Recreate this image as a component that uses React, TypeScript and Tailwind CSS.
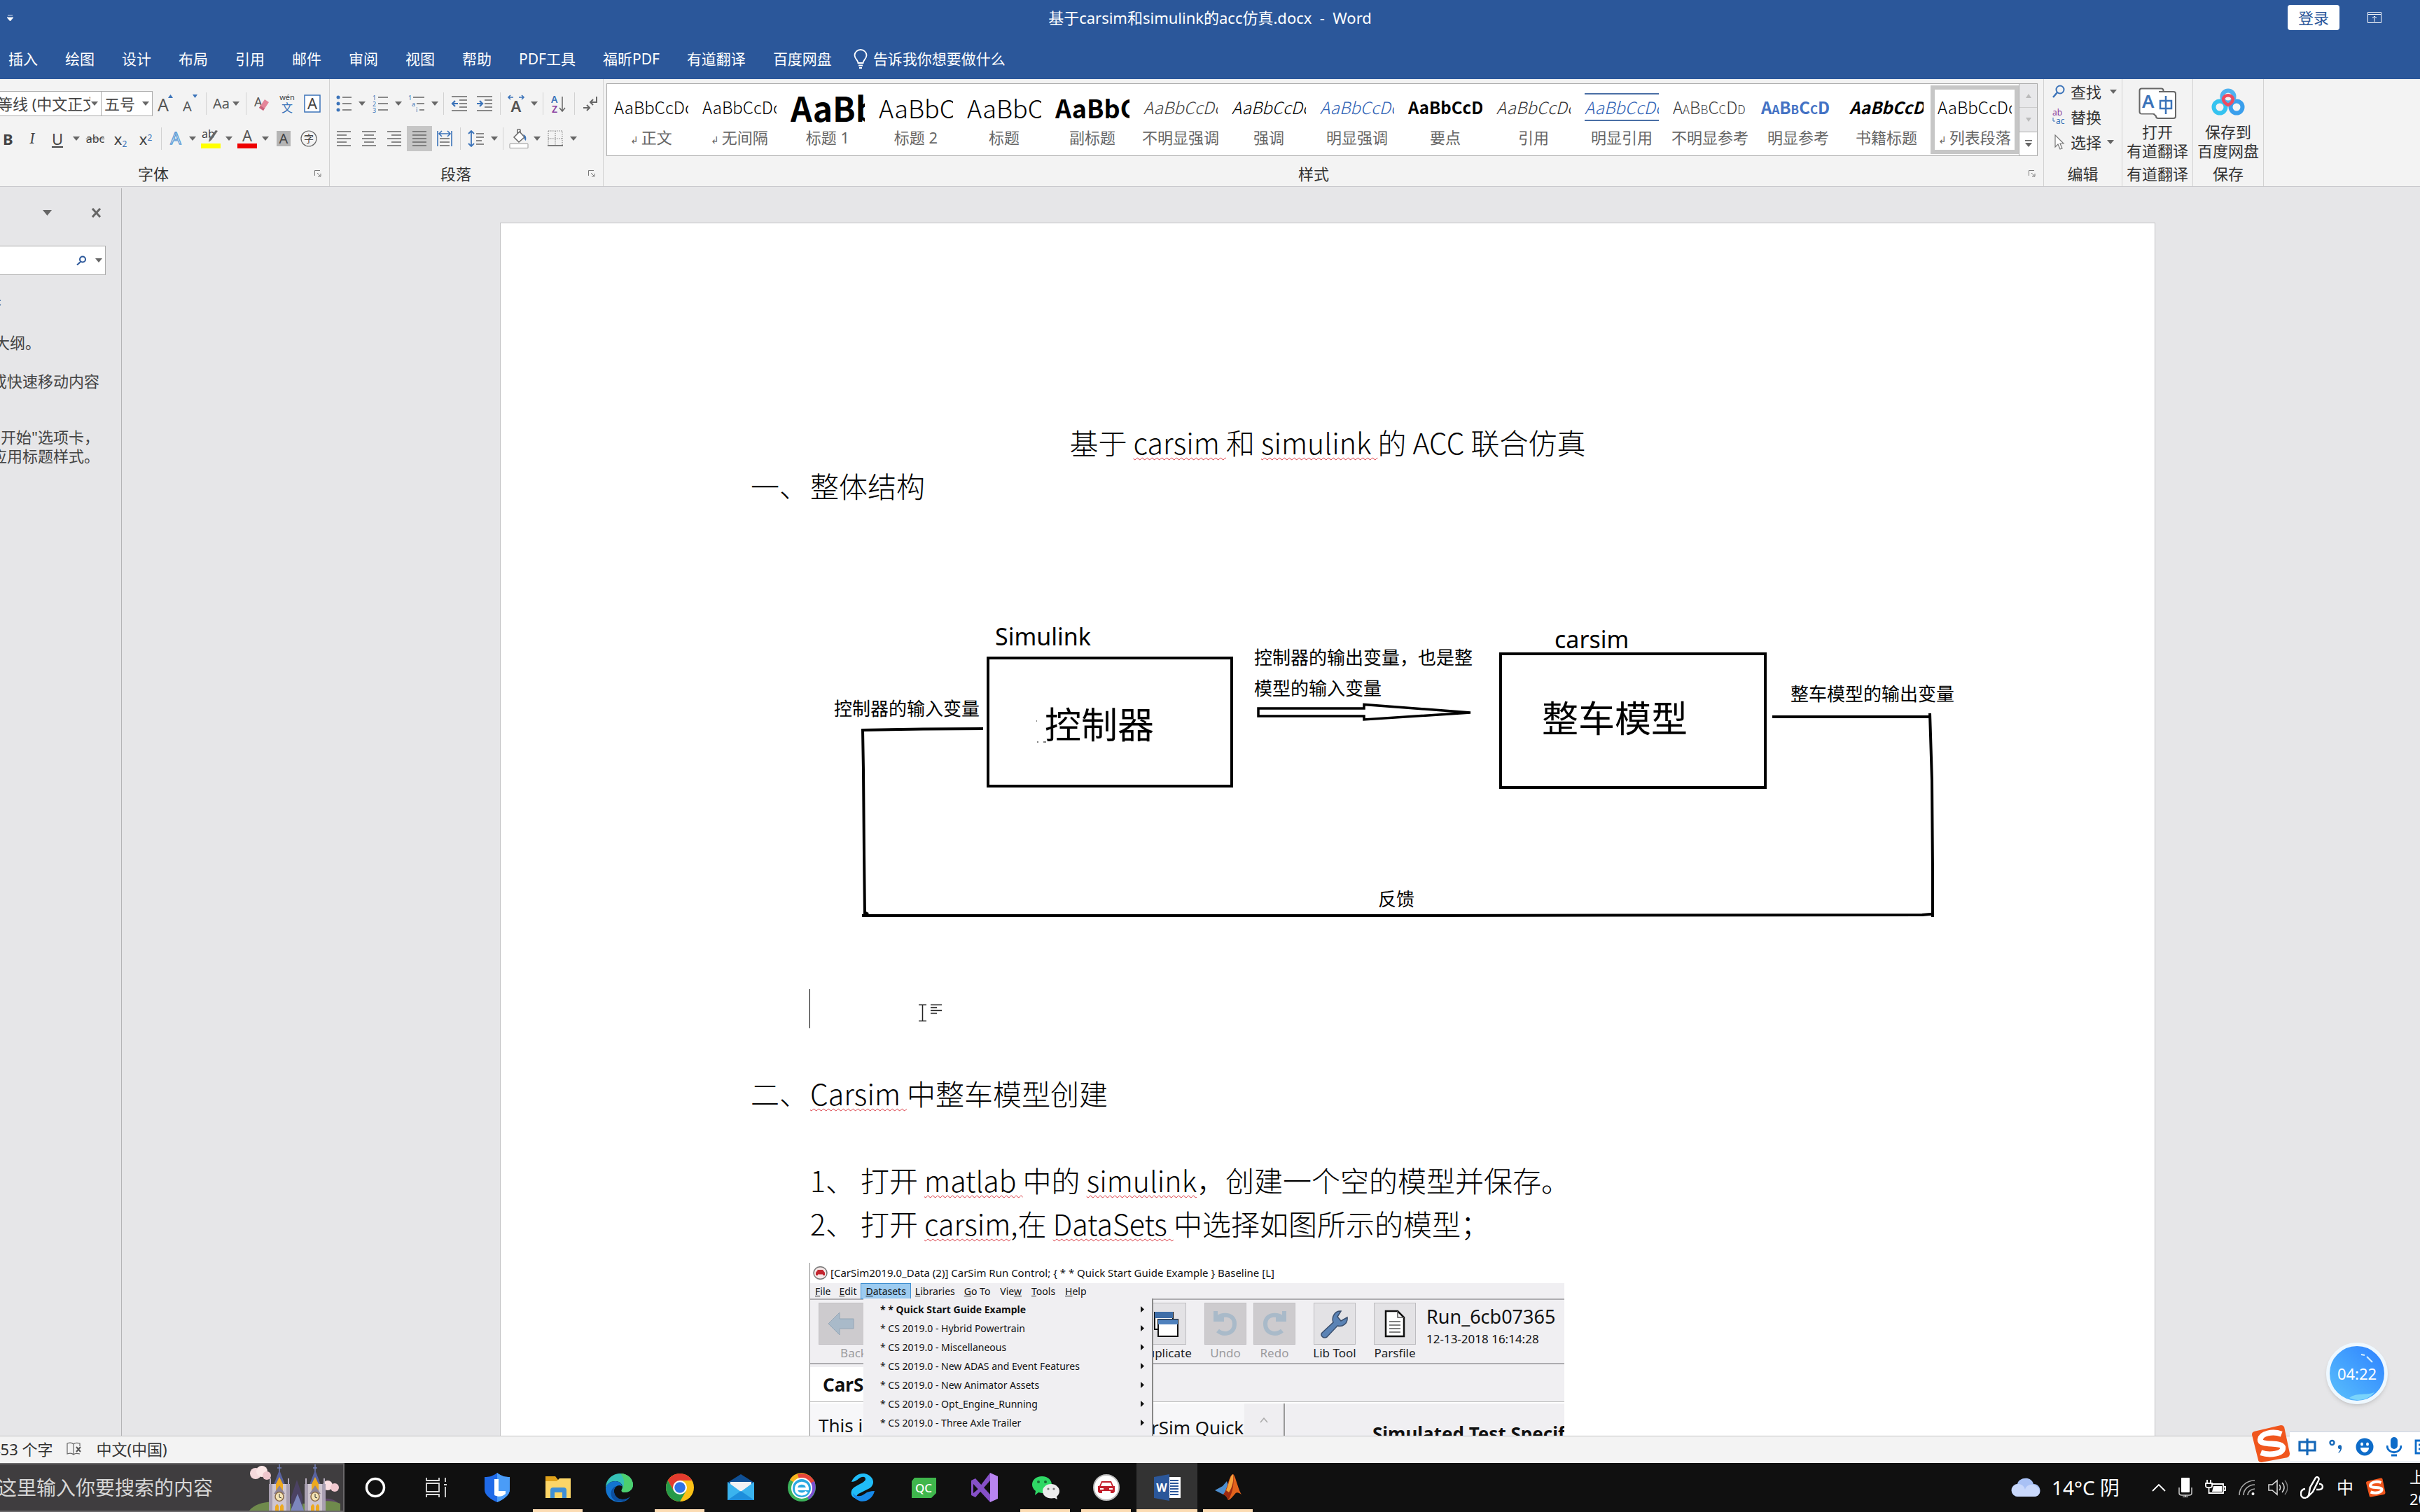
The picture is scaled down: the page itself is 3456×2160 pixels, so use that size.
import type { ReactNode } from 'react'

const tabs = ['插入', '绘图', '设计', '布局', '引用', '邮件', '审阅', '视图', '帮助', 'PDF工具', '福昕PDF', '有道翻译', '百度网盘']

const styles = [
  { name: '正文', para: true, sample: 'AaBbCcDc', cls: 'text-2xl font-light' },
  { name: '无间隔', para: true, sample: 'AaBbCcDc', cls: 'text-2xl font-light' },
  { name: '标题 1', sample: 'AaBb', cls: 'text-5xl font-bold' },
  { name: '标题 2', sample: 'AaBbC', cls: 'text-4xl font-light' },
  { name: '标题', sample: 'AaBbC', cls: 'text-4xl font-light' },
  { name: '副标题', sample: 'AaBbC', cls: 'text-4xl font-bold' },
  { name: '不明显强调', sample: 'AaBbCcDc', cls: 'text-2xl font-light italic text-[#404040]' },
  { name: '强调', sample: 'AaBbCcDc', cls: 'text-2xl font-light italic' },
  { name: '明显强调', sample: 'AaBbCcDc', cls: 'text-2xl font-light italic text-[#2f62b5]' },
  { name: '要点', sample: 'AaBbCcD', cls: 'text-2xl font-bold' },
  { name: '引用', sample: 'AaBbCcDc', cls: 'text-2xl font-light italic text-[#333]' },
  { name: '明显引用', sample: 'AaBbCcDc', cls: 'text-2xl font-light italic text-[#2f62b5] border-y-2 border-[#4a6fa5]' },
  { name: '不明显参考', sample: 'AaBbCcDd', cls: 'text-2xl font-light text-[#404040] [font-variant:small-caps]' },
  { name: '明显参考', sample: 'AaBbCcD', cls: 'text-2xl font-bold text-[#4472c4] [font-variant:small-caps]' },
  { name: '书籍标题', sample: 'AaBbCcD', cls: 'text-2xl font-bold italic' },
  { name: '列表段落', para: true, sample: 'AaBbCcDc', cls: 'text-2xl font-light', selected: true },
]

const datasets = [
  '* * Quick Start Guide Example',
  '* CS 2019.0 - Hybrid Powertrain',
  '* CS 2019.0 - Miscellaneous',
  '* CS 2019.0 - New ADAS and Event Features',
  '* CS 2019.0 - New Animator Assets',
  '* CS 2019.0 - Opt_Engine_Running',
  '* CS 2019.0 - Three Axle Trailer',
]

function Icon({ w, h = w, children }: { w: number; h?: number; children: ReactNode }) {
  return (
    <svg width={w} height={h} viewBox={`0 0 ${w} ${h}`} fill="none" className="shrink-0" aria-hidden="true">
      {children}
    </svg>
  )
}

function Tri({ color = '#666' }: { color?: string }) {
  return (
    <Icon w={10} h={6}>
      <path d="M0 0h10L5 6z" fill={color} />
    </Icon>
  )
}

function Tool({ label, active, children }: { label: string; active?: boolean; children: ReactNode }) {
  return (
    <button aria-label={label} className={`w-9 h-9 shrink-0 flex items-center justify-center ${active ? 'bg-[#c6c6c6]' : ''}`}>
      {children}
    </button>
  )
}

function Drop({ label }: { label: string }) {
  return (
    <button aria-label={label} className="w-4 h-9 shrink-0 flex items-center justify-center">
      <Tri />
    </button>
  )
}

const Sep = () => <span className="w-px h-8 mx-1 shrink-0 bg-[#d2d2d2]" />

function GroupLabel({ text, launcher }: { text: string; launcher?: boolean }) {
  return (
    <div className="mt-auto flex items-center leading-7 pb-1 text-[#333]">
      <span className="flex-1 text-center whitespace-nowrap">{text}</span>
      {launcher && (
        <button aria-label={`${text}设置`} className="w-8 flex justify-center">
          <Icon w={10} h={10}>
            <path d="M.5 8V.5H8M4 4l5 5M9 5v4H5" stroke="#777" />
          </Icon>
        </button>
      )}
    </div>
  )
}

/* Horizontal text lines, each given as [x1, x2] */
function Lines({ rows }: { rows: number[][] }) {
  return (
    <Icon w={22} h={24}>
      {rows.map(([a, b], i) => (
        <path key={i} d={`M${a} ${2 + i * 5}H${b}`} stroke="#666" strokeWidth={1.5} />
      ))}
    </Icon>
  )
}

function TitleBar() {
  return (
    <header className="bg-[#2b579a] text-white">
      <div className="h-[54px] pb-1 flex items-center">
        <div className="flex-1">
          <button aria-label="自定义快速访问工具栏" className="block ml-[10px]">
            <Icon w={9} h={9}>
              <path d="M1 1h7M0 4h9L4.500 9z" stroke="#fff" fill="#fff" strokeWidth={.8} />
            </Icon>
          </button>
        </div>
        <h1 className="whitespace-pre">基于carsim和simulink的acc仿真.docx  -  Word</h1>
        <div className="flex-1">
          <div className="flex items-center justify-end gap-10 mr-[55px]">
            <button className="bg-white text-[#2b579a] rounded-sm w-[74px] h-9">登录</button>
            <button aria-label="功能区显示选项">
              <Icon w={20} h={16}>
                <path d="M.5 .5h19v15H.5zM.5 3.500h19M10 14V6M7 9l3-3 3 3" stroke="#fff" />
              </Icon>
            </button>
          </div>
        </div>
      </div>
      <nav className="h-[59px] flex items-center gap-[39px] pl-3 text-[21px]">
        {tabs.map((t) => (
          <button key={t} className="whitespace-nowrap">{t}</button>
        ))}
        <button className="flex items-center gap-2 whitespace-nowrap -ml-2">
          <Icon w={20} h={28}>
            <path d="M6.500 20c0-4-5-6-5-11a8.500 8 0 0 1 17 0c0 5-5 7-5 11zM7 23.500h6M8 27h4" stroke="#fff" strokeWidth={1.8} />
          </Icon>
          告诉我你想要做什么
        </button>
      </nav>
    </header>
  )
}

function FontGroup() {
  return (
    <section className="w-[471px] shrink-0 pt-2.5 flex flex-col border-r border-[#d2d2d2]">
      <div className="h-[50px] flex items-center">
        <div className="w-[218px] h-9 shrink-0 flex bg-white border border-l-0 border-[#ababab] text-[#444]">
          <button className="w-[145px] flex items-center justify-between pr-1 border-r border-[#ababab] whitespace-nowrap">
            <span className="w-[129px] overflow-hidden text-left"><span className="-ml-1">等线 (中文正文)</span></span>
            <Tri />
          </button>
          <button className="flex-1 flex items-center justify-between px-1">
            五号
            <Tri />
          </button>
        </div>
        <Tool label="增大字号">
          <Icon w={22} h={26}>
            <text x="0" y="24" fontSize="25" fill="#555">A</text>
            <path d="M15 5h7l-3.500-5z" fill="#3b73b9" />
          </Icon>
        </Tool>
        <Tool label="减小字号">
          <Icon w={22} h={26}>
            <text x="0" y="24" fontSize="20" fill="#555">A</text>
            <path d="M14 0h7l-3.500 5z" fill="#3b73b9" />
          </Icon>
        </Tool>
        <Sep />
        <button className="w-12 shrink-0 flex items-center justify-center gap-1 text-xl text-[#555]">Aa<Tri /></button>
        <Sep />
        <Tool label="清除所有格式">
          <Icon w={22} h={26}>
            <text x="0" y="17" fontSize="18" fill="#555">A</text>
            <path d="M7 19l8-12 6 4-8 12z" fill="#e4869a" />
            <path d="M7 19l2-3 6 4-2 3z" fill="#c9647d" />
          </Icon>
        </Tool>
        <Tool label="拼音指南">
          <Icon w={24} h={28}>
            <text x="12" y="9" fontSize="11" textAnchor="middle" fill="#444">wén</text>
            <text x="12" y="26" fontSize="16" textAnchor="middle" fill="#3b73b9">文</text>
          </Icon>
        </Tool>
        <Tool label="字符边框">
          <Icon w={24} h={26}>
            <rect x="1" y="1" width="22" height="24" fill="#fff" stroke="#3b73b9" strokeWidth={1.500} />
            <text x="12" y="21" fontSize="22" textAnchor="middle" fill="#444">A</text>
          </Icon>
        </Tool>
      </div>
      <div className="h-[50px] flex items-center text-[#444]">
        <button className="w-7 pl-1 text-left font-bold">B</button>
        <button className="w-9 italic font-serif">I</button>
        <button className="w-9 underline">U</button>
        <button aria-label="下划线选项" className="w-[18px] flex justify-center"><Tri /></button>
        <button className="w-9 line-through text-base">abc</button>
        <button className="w-9">x<sub className="text-xs text-[#3b73b9]">2</sub></button>
        <button className="w-9">x<sup className="text-xs text-[#3b73b9]">2</sup></button>
        <Sep />
        <button aria-label="文本效果" className="w-8 flex justify-center">
          <Icon w={24} h={28}>
            <text x="12" y="22" fontSize="24" textAnchor="middle" fill="#fff" stroke="#5b9bd5" strokeWidth={1.300}>A</text>
          </Icon>
        </button>
        <Drop label="文本效果选项" />
        <Tool label="突出显示">
          <Icon w={30} h={28}>
            <text x="2" y="13" fontSize="16" fill="#444">ab</text>
            <path d="M25 3l-9 13-4 3 1-5L22 2z" fill="#666" />
            <path d="M1 21h28v7H1z" fill="#ff0" />
          </Icon>
        </Tool>
        <Drop label="突出显示选项" />
        <Tool label="字体颜色">
          <Icon w={30} h={28}>
            <text x="15" y="18" fontSize="22" textAnchor="middle" fill="#555">A</text>
            <path d="M1 21h28v7H1z" fill="#e00" />
          </Icon>
        </Tool>
        <Drop label="字体颜色选项" />
        <Tool label="字符底纹">
          <span className="bg-[#b5b5b5] px-1 leading-[22px] text-xl">A</span>
        </Tool>
        <Tool label="带圈字符">
          <Icon w={24}>
            <circle cx="12" cy="12" r="11" stroke="#666" strokeWidth={1.200} />
            <text x="12" y="17" fontSize="14" textAnchor="middle" fill="#444">字</text>
          </Icon>
        </Tool>
      </div>
      <GroupLabel text="字体" launcher />
    </section>
  )
}

function ParagraphGroup() {
  return (
    <section className="w-[391px] shrink-0 pt-2.5 pl-0.5 flex flex-col border-r border-[#d2d2d2]">
      <div className="h-[50px] flex items-center">
        <Tool label="项目符号">
          <Icon w={24} h={26}>
            {[4, 13, 22].map((y) => (
              <g key={y}>
                <circle cx="4" cy={y} r="2.500" fill="#3b73b9" />
                <path d={`M10 ${y}h13`} stroke="#666" strokeWidth={1.500} />
              </g>
            ))}
          </Icon>
        </Tool>
        <Drop label="项目符号选项" />
        <Tool label="编号">
          <Icon w={24} h={26}>
            {[4, 13, 22].map((y, i) => (
              <g key={y}>
                <text x="1" y={y + 4} fontSize="9" fill="#3b73b9">{i + 1}</text>
                <path d={`M9 ${y}h14`} stroke="#666" strokeWidth={1.500} />
              </g>
            ))}
          </Icon>
        </Tool>
        <Drop label="编号选项" />
        <Tool label="多级列表">
          <Icon w={24} h={26}>
            <text x="0" y="8" fontSize="9" fill="#3b73b9">1</text>
            <text x="5" y="17" fontSize="9" fill="#3b73b9">a</text>
            <text x="11" y="25" fontSize="9" fill="#3b73b9">i</text>
            <path d="M7 4h16M12 13h11M16 22h7" stroke="#666" strokeWidth={1.500} />
          </Icon>
        </Tool>
        <Drop label="多级列表选项" />
        <Sep />
        <Tool label="减少缩进量">
          <Icon w={24} h={24}>
            <path d="M1 2h22M12 7h11M12 12h11M12 17h11M1 22h22" stroke="#666" strokeWidth={1.500} />
            <path d="M10 12H2M6 8l-4 4 4 4" stroke="#3b73b9" strokeWidth={2.200} />
          </Icon>
        </Tool>
        <Tool label="增加缩进量">
          <Icon w={24} h={24}>
            <path d="M1 2h22M12 7h11M12 12h11M12 17h11M1 22h22" stroke="#666" strokeWidth={1.500} />
            <path d="M1 12h8M5 8l4 4-4 4" stroke="#3b73b9" strokeWidth={2.200} />
          </Icon>
        </Tool>
        <Sep />
        <Tool label="中文版式">
          <Icon w={26} h={26}>
            <text x="13" y="25" fontSize="22" textAnchor="middle" fill="#555" fontWeight="600">A</text>
            <path d="M9 4H2M5 1L2 4l3 3M17 4h7M21 1l3 3-3 3" stroke="#3b73b9" strokeWidth={1.600} />
          </Icon>
        </Tool>
        <Drop label="中文版式选项" />
        <Sep />
        <Tool label="排序">
          <Icon w={22} h={28}>
            <text x="0" y="13" fontSize="14" fill="#3b73b9" fontWeight="600">A</text>
            <text x="1" y="27" fontSize="14" fill="#8a3fa0" fontWeight="600">Z</text>
            <path d="M16 4v21M12 20l4 5 4-5" stroke="#666" strokeWidth={1.500} />
          </Icon>
        </Tool>
        <Sep />
        <Tool label="显示编辑标记">
          <Icon w={22} h={22}>
            <path d="M20 1v8h-8M15 5l-4 4 4 4M1 17h8M6 13l4 4-4 4" stroke="#666" strokeWidth={2} />
          </Icon>
        </Tool>
      </div>
      <div className="h-[50px] flex items-center">
        <Tool label="左对齐"><Lines rows={[[1, 21], [1, 15], [1, 21], [1, 15], [1, 21]]} /></Tool>
        <Tool label="居中"><Lines rows={[[1, 21], [4, 18], [1, 21], [4, 18], [1, 21]]} /></Tool>
        <Tool label="右对齐"><Lines rows={[[1, 21], [7, 21], [1, 21], [7, 21], [1, 21]]} /></Tool>
        <Tool label="两端对齐" active><Lines rows={[[1, 21], [1, 21], [1, 21], [1, 21], [1, 21]]} /></Tool>
        <Tool label="分散对齐">
          <Icon w={22} h={24}>
            <path d="M1 1v22M21 1v22M3 5h16M7 1L3 5l4 4M15 1l4 4-4 4" stroke="#3b73b9" strokeWidth={1.600} />
            <path d="M4 12h14M4 17h14M4 22h14" stroke="#666" strokeWidth={1.500} />
          </Icon>
        </Tool>
        <Sep />
        <Tool label="行和段落间距">
          <Icon w={24} h={24}>
            <path d="M5 1v22M1 5l4-4 4 4M1 19l4 4 4-4" stroke="#3b73b9" strokeWidth={1.800} />
            <path d="M12 5h11M12 10h11M12 15h8M12 20h11" stroke="#666" strokeWidth={1.500} />
          </Icon>
        </Tool>
        <Drop label="行距选项" />
        <Sep />
        <Tool label="底纹">
          <Icon w={28} h={28}>
            <path d="M7 12l8-8 7 8-8 7zM12 7V2c0-2 4-2 4 0v4" stroke="#666" strokeWidth={1.500} fill="#fff" />
            <path d="M20 8c4 1 5 4 4 9-2-1-3-4-2-6z" fill="#3b73b9" />
            <path d="M1 21.500h26v6H1z" stroke="#999" fill="#fff" />
          </Icon>
        </Tool>
        <Drop label="底纹选项" />
        <Tool label="边框">
          <Icon w={22} h={24}>
            <path d="M1 1h20v21M1 1v21M11 1v21M1 12h20" stroke="#777" strokeDasharray="1.500 1.500" />
            <path d="M0 22h22" stroke="#555" strokeWidth={1.500} />
          </Icon>
        </Tool>
        <Drop label="边框选项" />
      </div>
      <GroupLabel text="段落" launcher />
    </section>
  )
}

function StylesGroup() {
  return (
    <section className="shrink-0 pt-1.5 pl-1 flex flex-col border-r border-[#d2d2d2]">
      <div className="h-[104px] mr-2 flex bg-white border border-[#ababab]">
        {styles.map((s) => (
          <button
            key={s.name}
            className={`w-[126px] my-0.5 px-2.5 pt-1 flex flex-col items-center ${s.selected ? 'ring-[6px] ring-inset ring-[#c6c6c6]' : ''}`}
          >
            <span className="w-full h-[54px] flex items-center overflow-hidden text-black font-['Noto_Sans_CJK_SC',sans-serif]">
              <span className={`w-full text-left whitespace-nowrap ${s.cls} leading-9`}>{s.sample}</span>
            </span>
            <span className="mt-0.5 leading-7 whitespace-nowrap text-[#666]">
              {s.para && <span className="text-sm">↲ </span>}
              {s.name}
            </span>
          </button>
        ))}
        <div className="w-[26px] flex flex-col border-l border-[#ababab]">
          <button aria-label="上一行" className="flex-1 flex items-center justify-center bg-[#e8e8ea] border-b border-[#ccc]">
            <Icon w={8} h={6}><path d="M0 6h8L4 0z" fill="#bbb" /></Icon>
          </button>
          <button aria-label="下一行" className="flex-1 flex items-center justify-center bg-[#e8e8ea] border-b border-[#ababab]">
            <Icon w={8} h={6}><path d="M0 0h8L4 6z" fill="#bbb" /></Icon>
          </button>
          <button aria-label="其他" className="flex-1 flex items-center justify-center">
            <Icon w={10} h={10}><path d="M0 0h10v1.500H0zM0 4h10l-5 6z" fill="#666" /></Icon>
          </button>
        </div>
      </div>
      <GroupLabel text="样式" launcher />
    </section>
  )
}

function Ribbon() {
  return (
    <div className="h-[154px] flex bg-[#f3f3f3] border-b border-[#c8c8cc] text-[#333]">
      <FontGroup />
      <ParagraphGroup />
      <StylesGroup />
      <section className="w-28 shrink-0 flex flex-col border-r border-[#d2d2d2]">
        <div className="flex flex-col pl-3">
          <button className="h-9 flex items-center gap-2">
            <Icon w={18} h={20}>
              <circle cx="11" cy="7" r="5.500" stroke="#3b73b9" strokeWidth={2} />
              <path d="M7 11l-6 7" stroke="#3b73b9" strokeWidth={2.500} />
            </Icon>
            查找<span className="pl-1"><Tri /></span>
          </button>
          <button className="h-9 flex items-center gap-2">
            <Icon w={18} h={24}>
              <text x="0" y="10" fontSize="12" fill="#8a3fa0">ab</text>
              <text x="5" y="22" fontSize="12" fill="#3b73b9">ac</text>
              <path d="M1 13v5h3" stroke="#3b73b9" />
            </Icon>
            替换
          </button>
          <button className="h-9 flex items-center gap-2">
            <Icon w={18} h={22}>
              <path d="M4 1v17l4-4 3 7 3-1-3-7h5z" stroke="#777" fill="#fff" strokeWidth={1.200} />
            </Icon>
            选择<Tri />
          </button>
        </div>
        <GroupLabel text="编辑" />
      </section>
      <section className="w-[101px] shrink-0 flex flex-col items-stretch border-r border-[#d2d2d2]">
        <button className="pt-3 flex flex-col items-center leading-[27px] whitespace-nowrap">
          <Icon w={54} h={46}>
            <rect x="1.500" y="1.500" width="34" height="36" rx="3" fill="#fff" stroke="#666" strokeWidth={2} />
            <path d="M22 6h28a3 3 0 0 1 3 3v32a3 3 0 0 1-3 3H28a3 3 0 0 1-3-3l-4-4V9z" fill="#fff" stroke="#666" strokeWidth={2} />
            <path d="M3 3h26v34H3z" fill="#fff" />
            <text x="5" y="29" fontSize="26" fill="#3b73b9" fontWeight="600">A</text>
            <path d="M31 19h16v11H31zM39 12v26" stroke="#3b73b9" strokeWidth={2.500} />
          </Icon>
          <span className="pt-1">打开</span>
          <span>有道翻译</span>
        </button>
        <GroupLabel text="有道翻译" />
      </section>
      <section className="w-[101px] shrink-0 flex flex-col border-r border-[#d2d2d2]">
        <button className="pt-3 flex flex-col items-center leading-[27px] whitespace-nowrap">
          <Icon w={48} h={46}>
            <circle cx="12" cy="28" r="8.500" stroke="#35c3f0" strokeWidth={6} />
            <circle cx="36" cy="28" r="8.500" stroke="#3a9fec" strokeWidth={6} />
            <circle cx="24" cy="13" r="8.500" stroke="#4fb2f0" strokeWidth={6} />
            <path d="M17 16a7.500 7.500 0 0 1 14 0c0 5-3 7-7 9-4-2-7-4-7-9z" stroke="#ef4b5f" strokeWidth={4.500} />
          </Icon>
          <span className="pt-1">保存到</span>
          <span>百度网盘</span>
        </button>
        <GroupLabel text="保存" />
      </section>
    </div>
  )
}

function NavPane() {
  return (
    <aside className="w-[174px] mt-0.5 shrink-0 overflow-hidden border-r border-[#b4b4b6] text-[#444]">
      <div className="h-[78px] pb-2 flex items-center justify-end gap-14 pr-7">
        <button aria-label="任务窗格选项"><Icon w={13} h={8}><path d="M0 0h13L6.500 8z" fill="#666" /></Icon></button>
        <button aria-label="关闭"><Icon w={15} h={14}><path d="M2 1l11 12M13 1L2 13" stroke="#666" strokeWidth={3} /></Icon></button>
      </div>
      <label className="mt-1 h-[42px] w-[151px] flex items-center bg-white border border-l-0 border-[#ababab] pr-1">
        <input aria-label="搜索文档" className="min-w-0 flex-1 h-full outline-none" />
        <Icon w={15} h={14}>
          <circle cx="9" cy="5.500" r="4" stroke="#2b579a" strokeWidth={2} />
          <path d="M6 9l-5 4.500" stroke="#2b579a" strokeWidth={2} />
        </Icon>
        <span className="pl-3"><Tri /></span>
      </label>
      <div className="-ml-2 whitespace-nowrap leading-[27px]">
        <p className="-ml-3 pt-5">果</p>
        <p className="pt-9">大纲。</p>
        <p className="-ml-1 pt-7">或快速移动内容</p>
        <p className="pt-[53px]">"开始"选项卡，</p>
        <p className="-ml-1">应用标题样式。</p>
      </div>
    </aside>
  )
}

function Typo({ children }: { children: ReactNode }) {
  return (
    <span className="underline decoration-wavy decoration-[#d8343c] decoration-1 underline-offset-4 [text-decoration-skip-ink:none]">
      {children}
    </span>
  )
}

/* Control loop: controller -> vehicle model -> feedback */
function LoopDiagram() {
  return (
    <svg
      width="1660"
      height="682"
      viewBox="1156 728 1660 682"
      className="block max-w-none mt-1 ml-[84px] font-normal font-['Noto_Sans','Noto_Sans_CJK_SC',sans-serif]"
      fill="none"
      stroke="#000"
      strokeWidth="4"
    >
      <rect x="1411" y="940" width="348" height="183" />
      <rect x="2143" y="934" width="378" height="191" />
      <path d="M1404 1041L1318 1041.500L1232 1043L1233 1100L1234 1220L1235 1308" />
      <path d="M1231 1308H1980L2745 1307L2762 1305.500" />
      <path d="M1236 1304l4 2" />
      <path d="M2531 1024H2756M2756 1019L2757 1050L2759 1115L2760 1245L2760 1310" />
      <path d="M1797 1012H1948V1006.500L2100 1018L1948 1028V1023H1797z" strokeWidth="3.500" />
      <path d="M1480 1030h1M1481 1060h2M1490 1060h4" strokeWidth="1" />
      <g fill="#000" stroke="none" fontSize="26">
        <text x="1191" y="1022">控制器的输入变量</text>
        <text x="1791" y="949">控制器的输出变量，也是整</text>
        <text x="1791" y="993">模型的输入变量</text>
        <text x="2557" y="1001">整车模型的输出变量</text>
        <text x="1968" y="1294">反馈</text>
        <text x="1421" y="922" fontSize="34">Simulink</text>
        <text x="2220" y="926" fontSize="34">carsim</text>
        <text x="1492" y="1055" fontSize="52">控制器</text>
        <text x="2202" y="1046" fontSize="52">整车模型</text>
      </g>
    </svg>
  )
}

function CarButton({ label, off, wide, children }: { label: string; off?: boolean; wide?: boolean; children: ReactNode }) {
  return (
    <button className={`shrink-0 flex flex-col items-center text-[17px] leading-6 whitespace-nowrap ${wide ? 'w-[100px]' : 'w-[60px]'} ${off ? 'text-[#9a9a9e]' : 'text-[#222]'}`}>
      <span className={`w-full h-[60px] flex items-center border ${wide ? 'pl-3' : 'justify-center'} ${off ? 'bg-[#cdcbce] border-[#c2c0c4]' : 'bg-[#e3e2e5] border-[#bdbcc0]'}`}>
        {children}
      </span>
      {label}
    </button>
  )
}

function CarSimShot() {
  return (
    <div className="relative ml-[84px] mt-[26px] w-[1078px] h-[400px] overflow-hidden border-l border-[#8a8a8a] bg-[#f0eff2] text-[#111]">
      <div className="h-[29px] bg-white flex items-center gap-1 pl-1 text-[15px]">
        <Icon w={21} h={19}>
          <ellipse cx="10.500" cy="9.500" rx="9.500" ry="8.800" fill="#f5e8e8" stroke="#777" strokeWidth={1.500} />
          <path d="M4 13v-4l3-4h7l3 4v4h-3v-1.500H7V13z" fill="#c3262f" />
        </Icon>
        <span className="whitespace-nowrap">[CarSim2019.0_Data (2)] CarSim Run Control; {'{ * * Quick Start Guide Example }'} Baseline [L]</span>
      </div>
      <div className="h-[22px] flex items-center pl-px text-sm leading-[21px]">
        <button className="px-[6px]"><u>F</u>ile</button>
        <button className="px-[6px]"><u>E</u>dit</button>
        <button className="px-[6px] bg-[#9ccbf0] border border-[#3f8fd0]"><u>D</u>atasets</button>
        <button className="px-[6px]"><u>L</u>ibraries</button>
        <button className="px-[7px]"><u>G</u>o To</button>
        <button className="px-[7px]">Vie<u>w</u></button>
        <button className="px-[7px]"><u>T</u>ools</button>
        <button className="px-[7px]"><u>H</u>elp</button>
      </div>
      <div className="h-[94px] flex border-y-2 border-[#adacb0] pt-1 pl-3">
        <CarButton label="Back" off wide>
          <Icon w={38} h={46}><path d="M1 23L17 7v9h20v14H17v9z" fill="#a9bac9" stroke="#94a6b6" /></Icon>
        </CarButton>
        <div className="w-[365px] shrink-0" />
        <CarButton label="Duplicate">
          <Icon w={40} h={44}>
            <path d="M5 6h26v24H5z" fill="#fff" stroke="#111" strokeWidth={2} />
            <path d="M5 5h26v9H5z" fill="#3f6ea8" />
            <path d="M10 16h28v24H10z" fill="#fff" stroke="#111" strokeWidth={2} />
            <path d="M10 16h28v7H10z" fill="#4f81bd" />
          </Icon>
        </CarButton>
        <div className="ml-[26px] flex gap-[10px]">
          <CarButton label="Undo" off>
            <Icon w={42} h={44}><path d="M7 4v12h12M8 15c6-8 26-8 26 7s-16 17-24 10" stroke="#a9bac9" strokeWidth={6} /></Icon>
          </CarButton>
          <CarButton label="Redo" off>
            <Icon w={42} h={44}><path d="M35 4v12H23M34 15c-6-8-26-8-26 7s16 17 24 10" stroke="#a9bac9" strokeWidth={6} /></Icon>
          </CarButton>
        </div>
        <div className="ml-[26px] flex gap-[26px]">
          <CarButton label="Lib Tool">
            <Icon w={42} h={42}><path d="M3 34l16-15c-3-8 3-17 11-16l-5 8 5 6 9-5c1 9-7 14-14 12L10 40c-5 3-10-2-7-6z" fill="#5b83b5" stroke="#3a4f6e" strokeWidth={1.500} /></Icon>
          </CarButton>
          <CarButton label="Parsfile">
            <Icon w={30} h={40}>
              <path d="M2 2h17l9 9v27H2z" fill="#fff" stroke="#111" strokeWidth={2.500} />
              <path d="M19 2v9h9M7 17h16M7 22h16M7 27h16M7 32h16" stroke="#555" strokeWidth={1.500} />
            </Icon>
          </CarButton>
        </div>
        <div className="pl-[15px] pt-0.5 whitespace-nowrap">
          <p className="text-[27px] leading-9">Run_6cb07365</p>
          <p className="text-[17px] leading-7">12-13-2018 16:14:28</p>
        </div>
      </div>
      <div className="mt-1 h-[50px] flex border-b border-[#bbb]">
        <p className="w-[78px] bg-white pl-[18px] text-[26px] leading-[50px] font-bold">CarSim</p>
      </div>
      <div className="flex text-[26px] border-t-2 border-white">
        <p className="w-[620px] shrink-0 pl-3 pt-[12px] whitespace-pre bg-[#f7f7f9]">This is</p>
        <div className="w-[58px] shrink-0 pt-5 flex justify-center bg-[#efeef1] border-r-2 border-[#999]">
          <Icon w={12} h={8}><path d="M1 7l5-6 5 6" stroke="#aaa" strokeWidth={1.500} /></Icon>
        </div>
        <p className="pl-[125px] pt-6 font-bold whitespace-nowrap">Simulated Test Specifications</p>
      </div>
      <p className="absolute left-[456px] top-[212px] text-[26px] leading-[46px]">CarSim Quick</p>
      <ul className="absolute left-[76px] top-[51px] w-[414px] h-[349px] py-0.5 bg-[#f0eff2] border-r-2 border-[#888] text-sm">
        {datasets.map((d, i) => (
          <li key={d} className={`h-[27px] flex items-center justify-between pl-6 pr-2.5 ${i === 0 ? 'font-bold' : ''}`}>
            {d}
            <Icon w={6} h={9}><path d="M0 0l5 4.500L0 9z" fill="#111" /></Icon>
          </li>
        ))}
      </ul>
    </div>
  )
}

function Document() {
  return (
    <main className="flex-1 min-w-0 overflow-hidden pt-[51px] pl-[540px] pr-[378px]">
      <article className="h-[3300px] bg-white border border-[#c2c2c4] pt-[281px] px-[357px] text-[41px] leading-[62px] font-light text-black font-['Noto_Sans_CJK_SC',sans-serif] whitespace-nowrap">
        <h2 className="text-center">基于 <Typo>carsim </Typo>和 <Typo>simulink </Typo>的 ACC 联合仿真</h2>
        <h3 className="flex"><span className="w-[85px]">一、</span>整体结构</h3>
        <LoopDiagram />
        <div className="h-[62px] pl-[84px] flex items-center">
          <span className="w-px h-14 bg-black" />
          <span className="pl-[155px] pt-3">
            <Icon w={34} h={26}>
              <path d="M0 1.500h11M0 24.500h11M5.500 2v22M17 1.500h16M17 5.500h9M17 9.500h16M17 13.500h9" stroke="#222" strokeWidth={1.500} />
            </Icon>
          </span>
        </div>
        <h3 className="pt-[58px] flex"><span className="w-[85px]">二、</span><span><Typo>Carsim </Typo>中整车模型创建</span></h3>
        <ol className="pt-[62px] pl-[85px]">
          <li className="flex"><span className="w-[72px]">1、</span><span>打开 <Typo>matlab </Typo>中的 <Typo>simulink</Typo>，创建一个空的模型并保存。</span></li>
          <li className="flex"><span className="w-[72px]">2、</span><span>打开 <Typo>carsim</Typo>,在 <Typo>DataSets </Typo>中选择如图所示的模型；</span></li>
        </ol>
        <div className="leading-normal font-normal font-['Noto_Sans','Noto_Sans_CJK_SC',sans-serif]">
          <CarSimShot />
        </div>
      </article>
    </main>
  )
}

function StatusBar() {
  return (
    <footer className="h-[39px] shrink-0 pb-0.5 flex items-center gap-5 bg-[#f3f3f3] border-t border-[#c2c2c4] text-[#333] overflow-hidden">
      <span className="-ml-3 whitespace-nowrap">453 个字</span>
      <Icon w={22} h={20}>
        <path d="M10 3v15M10 3C8 1 4 1 1 2v15c3-1 7-1 9 1 2-2 5-2 9-1M10 3c2-2 5-2 9-1v4" stroke="#666" strokeWidth={1.200} />
        <path d="M14 7l6 7M20 7l-6 7" stroke="#555" strokeWidth={2} />
      </Icon>
      <span>中文(中国)</span>
    </footer>
  )
}

function Castle() {
  return (
    <Icon w={130} h={66}>
      <circle cx="9" cy="13" r="8" fill="#f5d9dc" />
      <circle cx="18" cy="10" r="8" fill="#fbe6e6" />
      <circle cx="25" cy="16" r="6" fill="#eec6cc" />
      <circle cx="112" cy="30" r="7" fill="#fbe0e2" />
      <circle cx="122" cy="33" r="6" fill="#f0c8cf" />
      <path d="M90 66c8-22 28-20 38-10v10z" fill="#5d4668" />
      <path d="M0 66c8-10 28-16 50-10h40c18-6 30-4 40 0v10z" fill="#6f8a4c" />
      <path d="M60 66V46l8-24 8 24v20z" fill="#4b4263" />
      <path d="M59 66l10-24 9 24z" fill="#7c86bd" />
      {[43, 94].map((x) => (
        <g key={x}>
          <path d={`M${x} 0v12M${x - 3} 5h6`} stroke="#7380b8" strokeWidth={1.500} />
          <path d={`M${x} 8l10 26h-20z`} fill="#5a64a0" />
          <path d={`M${x - 15} 28h30v38h-30z`} fill="#cfc6cf" />
          <path d={`M${x - 15} 28h5v38h-5zM${x + 10} 28h5v38h-5z`} fill="#a9a0b2" />
          <path d={`M${x - 13} 28v-8M${x + 13} 28v-8`} stroke="#b5acbc" strokeWidth={2} />
          <path d={`M${x - 5} 40V28l5-10 5 10v12z`} fill="#eda91f" />
          <path d={`M${x - 8} 42l8-12 8 12z`} fill="#8d8496" />
          <ellipse cx={x} cy={46} rx={6} ry={6.5} fill="#f3e2b4" stroke="#8b6a45" strokeWidth={1.500} />
          <path d={`M${x} 42v5l3 1`} stroke="#333" />
          <path d={`M${x - 6} 66v-6c2-4 4-4 5 0v6zM${x + 1} 66v-6c2-4 4-4 5 0v6z`} fill="#eda91f" />
        </g>
      ))}
    </Icon>
  )
}

const taskIcons: { name: string; state?: 'open' | 'active'; icon: ReactNode }[] = [
  { name: 'Cortana', icon: <circle cx="20" cy="21" r="12.500" stroke="#fff" strokeWidth={3.500} /> },
  {
    name: '任务视图',
    icon: <path d="M6 7v4h18V7M6 35v-4h18v4M6 15h18v12H6zM33 7v6M33 20v15M31 17h4" stroke="#ddd" strokeWidth={1.800} />,
  },
  {
    name: '联想电脑管家',
    icon: (
      <>
        <path d="M20 0c6 5 12 6 18 6v18c0 8-9 14-18 18C11 38 2 32 2 24V6c6 0 12-1 18-6z" fill="#1f6ae8" />
        <path d="M20 0c6 5 12 6 18 6v18c0 8-9 14-18 18z" fill="#4a9cf7" />
        <path d="M16 9h6v17h10v4c-4 4-10 5-16 2z" fill="#fff" />
      </>
    ),
  },
  {
    name: '文件资源管理器',
    state: 'open',
    icon: (
      <>
        <path d="M2 5h14l4 5h18v8H2z" fill="#e0a21b" />
        <path d="M2 12h16l4-4h16v28H2z" fill="#fcd667" />
        <path d="M9 36V25a4 4 0 0 1 4-4h15a4 4 0 0 1 4 4v11h-6v-8H15v8z" fill="#3e8fd6" />
      </>
    ),
  },
  {
    name: 'Edge',
    icon: (
      <>
        <path d="M1 22C1 8 12 1 22 1c11 0 18 8 18 16 0 8-7 11-12 11-4 0-5-2-4-4 3-5-1-12-9-12C7 12 2 17 1 22z" fill="#35c1b6" />
        <path d="M22 1c11 0 18 8 18 16 0 8-7 11-12 11-4 0-5-2-4-4 5-7 4-16-2-23z" fill="#4ccf6e" />
        <path d="M1 22c1-6 7-10 14-10 5 0 9 3 9 7-6-3-12 2-11 9 1 6 6 10 12 10 5 0 9-2 11-4-4 6-10 8-15 8C9 42 1 33 1 22z" fill="#1374cf" />
        <path d="M13 28c1 6 6 10 12 10 5 0 9-2 11-4-6 9-18 9-24 4-6-6-4-16 4-19-2 2-4 5-3 9z" fill="#0c4f9e" />
      </>
    ),
  },
  {
    name: 'Chrome',
    state: 'open',
    icon: (
      <>
        <circle cx="20" cy="21" r="20" fill="#fbc116" />
        <path d="M2.700 11A20 20 0 0 1 37.300 11H20L11.300 26z" fill="#e33b2e" />
        <path d="M2.700 11A20 20 0 0 0 20 41l8.700-15H11.300z" fill="#269a4a" />
        <circle cx="20" cy="21" r="10" fill="#fff" />
        <circle cx="20" cy="21" r="7.800" fill="#2f72e6" />
      </>
    ),
  },
  {
    name: '邮件',
    icon: (
      <>
        <path d="M1 14L20 2l19 12v12H1z" fill="#0f4f94" />
        <path d="M5 13h30v18H5z" fill="#f2f2f4" />
        <path d="M1 13l19 14 19-14v26H1z" fill="#3ab3ee" />
        <path d="M1 39h38L20 26z" fill="#1d8edc" />
      </>
    ),
  },
  {
    name: '360极速浏览器',
    icon: (
      <>
        <circle cx="20" cy="21" r="20" fill="#3bb25a" />
        <path d="M20 21L3 10C9-1 24-3 33 6z" fill="#f6b51e" />
        <path d="M20 21L14 2c11-3 21 2 25 12z" fill="#e8453a" />
        <path d="M20 21l18-9c4 11 0 20-8 26z" fill="#7a4fd0" />
        <circle cx="20" cy="22" r="14" fill="#2aa9e0" stroke="#fff" strokeWidth={2} />
        <path d="M12 23h16c0-11-16-11-16 0 0 9 12 9 15 4" stroke="#fff" strokeWidth={4} />
      </>
    ),
  },
  {
    name: '2345浏览器',
    icon: (
      <>
        <path d="M4 13C8 3 19-2 28 3c9 5 9 14 2 19L14 30c-4 3-3 6 2 7C7 38 2 32 4 26c2-8 20-11 20-17 0-4-5-4-9-1-3 2-6 5-11 5z" fill="#20bdf8" />
        <path d="M37 26c-3 12-14 17-22 14-6-2-9-7-9-11 4 6 12 5 17 1 4-3 8-4 14-4z" fill="#1689ea" />
      </>
    ),
  },
  {
    name: 'Qt Creator',
    icon: (
      <>
        <path d="M7 7h31v22l-7 7H3V12z" fill="#3fb64c" />
        <text x="20" y="28" fontSize="17" fontWeight="500" textAnchor="middle" fill="#fff">QC</text>
      </>
    ),
  },
  {
    name: 'Visual Studio',
    icon: (
      <>
        <path d="M28 0l11 5v32l-11 5z" fill="#b884f0" />
        <path d="M1 11l6-3 21 23V42L4 16v13l6-5 18-24v11L7 35l-6-3z" fill="#8650c8" />
      </>
    ),
  },
  {
    name: '微信',
    state: 'open',
    icon: (
      <>
        <path d="M15 5c9 0 14 6 14 12S24 29 15 29l-5-1-5 4 1-6C-4 18 2 5 15 5z" fill="#2fd865" />
        <circle cx="10" cy="13" r="2" fill="#176f35" />
        <circle cx="20" cy="13" r="2" fill="#176f35" />
        <path d="M28 16c7 0 12 5 12 10 0 4-2 6-4 8l1 4-4-2c-10 2-17-3-17-10 0-5 5-10 12-10z" fill="#ececec" />
        <circle cx="24" cy="23" r="1.600" fill="#777" />
        <circle cx="32" cy="23" r="1.600" fill="#777" />
      </>
    ),
  },
  {
    name: 'CarSim',
    state: 'open',
    icon: (
      <>
        <circle cx="20" cy="21" r="18" fill="#fff" stroke="#bbb" strokeWidth={2} />
        <path d="M13 12h14l3 7h2v8l-2 2h-4v-3H14v3h-4l-2-2v-8h2z" fill="#c3202d" />
        <path d="M14 14h12l2 5H12zM11 22h5v2h-5zM24 22h5v2h-5z" fill="#fff" />
      </>
    ),
  },
  {
    name: 'Word',
    state: 'active',
    icon: (
      <>
        <path d="M22 6h17v30H22z" fill="#fff" />
        <path d="M24 11h12M24 15h12M24 19h12M24 23h12M24 27h12M24 31h12" stroke="#2b579a" strokeWidth={1.800} />
        <path d="M1 6l22-4v38L1 36z" fill="#2b579a" />
        <text x="12" y="27" fontSize="16" fontWeight="700" textAnchor="middle" fill="#fff">W</text>
      </>
    ),
  },
  {
    name: 'MATLAB',
    state: 'open',
    icon: (
      <>
        <path d="M1 25l11-6 6-7 3 10-8 9z" fill="#4d8fd0" />
        <path d="M13 31c6-6 8-28 14-29 3 1 7 21 12 29-5-3-7-4-10 0-3 3-5 7-9 8-2-5-4-7-7-8z" fill="#e2631c" />
        <path d="M27 2c2 9 0 27-7 37-2-5-4-7-7-8 6-6 8-28 14-29z" fill="#9c2b13" />
        <path d="M27 2c1 10-1 18-6 26l-4-3c4-8 5-21 10-23z" fill="#f6a13a" />
      </>
    ),
  },
]

function SogouLogo({ size }: { size: number }) {
  return (
    <svg width={size} height={size} viewBox="0 0 56 54" fill="none" className="shrink-0" aria-hidden="true">
      <path d="M4 9L42 0c3 0 4 1 5 3l8 38c0 3-1 5-4 6l-37 7c-3 0-5-1-5-4L0 14c0-3 1-4 4-5z" fill="#f0561d" />
      <path d="M43 13C30 8 13 12 12 21c-1 10 33 2 33 12 0 8-18 12-32 7" stroke="#fff" strokeWidth={8} />
    </svg>
  )
}

function TaskBar() {
  return (
    <footer className="h-[70px] shrink-0 flex bg-[#101010] text-white overflow-hidden">
      <label className="w-[492px] shrink-0 flex items-center justify-between bg-[#3f3d3f] border-2 border-l-0 border-[#6a686a] pr-1">
        <input
          aria-label="搜索"
          placeholder="这里输入你要搜索的内容"
          className="min-w-0 flex-1 -ml-1 h-full outline-none text-[28px] placeholder:text-[#d6d6d6] placeholder:opacity-100"
        />
        <Castle />
      </label>
      <div className="flex">
        {taskIcons.map((t) => (
          <button
            key={t.name}
            aria-label={t.name}
            className={`w-[87px] flex flex-col items-center justify-between pt-3.5 ${t.state === 'active' ? 'bg-[#333]' : ''}`}
          >
            <Icon w={40} h={42}>{t.icon}</Icon>
            {t.state && <span className={`h-1 bg-[#fcdcb4] ${t.state === 'active' ? 'w-full' : 'w-[71px]'}`} />}
          </button>
        ))}
      </div>
      <div className="ml-auto shrink-0 flex items-center text-[28px]">
        <button className="flex items-center gap-4 whitespace-nowrap">
          <Icon w={42} h={30}>
            <path d="M10 28a9 9 0 0 1-1-18C11 0 29-2 32 10c12 0 13 18 1 18z" fill="#a9c1f5" />
            <path d="M10 28a9 9 0 0 1 0-18c6 0 9 4 10 8 2-9 14-9 17-4 7 5 4 14-4 14z" fill="#c9d8fb" />
          </Icon>
          14°C 阴
        </button>
        <div className="ml-[46px] mr-[34px] flex items-center gap-[18px]">
          <button aria-label="显示隐藏的图标"><Icon w={20} h={12}><path d="M1 11l9-9 9 9" stroke="#fff" strokeWidth={1.800} /></Icon></button>
          <button aria-label="麦克风">
            <Icon w={20} h={28}>
              <rect x="4" y="0" width="12" height="21" rx="1" fill="#fff" />
              <path d="M1 14v8c0 2 2 3 4 3h10c2 0 4-1 4-3v-8M10 25v3M6 27.500h8" stroke="#ccc" strokeWidth={1.500} />
            </Icon>
          </button>
          <button aria-label="电池">
            <Icon w={30} h={22}>
              <path d="M3 0v5M8 0v5M1 5h9v4c0 3-9 3-9 0zM5.500 11v8H10" stroke="#fff" strokeWidth={1.800} />
              <path d="M10 6h16v13H10M27 10h2v5h-2" stroke="#fff" strokeWidth={1.800} />
              <path d="M12 9h12v8H10z" fill="#fff" />
            </Icon>
          </button>
          <button aria-label="网络">
            <Icon w={24} h={24}>
              <path d="M1 23C1 11 11 2 23 2M7 23c0-9 8-15 16-15M13 23c0-5 5-9 10-9" stroke="#aaa" strokeWidth={1.600} />
              <circle cx="20.500" cy="21" r="2" fill="#fff" />
            </Icon>
          </button>
          <button aria-label="音量">
            <Icon w={28} h={24}>
              <path d="M1 8h5l7-6v20l-7-6H1zM16 8c2 2 2 6 0 8M20 5c4 4 4 10 0 14" stroke="#ddd" strokeWidth={1.500} />
              <path d="M24 2c5 6 5 14 0 20" stroke="#777" strokeWidth={1.500} />
            </Icon>
          </button>
          <button aria-label="手写笔">
            <Icon w={34} h={32}>
              <path d="M12 28l2-12 8-14c2-2 6 0 4 4l-8 16zM7 18c-8 1-8 12-1 13 3 0 5-2 6-4M27 11c6-1 7 8 0 8h-4" stroke="#fff" strokeWidth={2.400} />
            </Icon>
          </button>
          <button className="text-2xl">中</button>
          <button aria-label="搜狗输入法"><SogouLogo size={28} /></button>
        </div>
        <div className="w-[15px] overflow-hidden text-[22px] leading-8 whitespace-nowrap">
          <p>上午</p>
          <p>2022</p>
        </div>
      </div>
    </footer>
  )
}

function InputMethodBar() {
  return (
    <div className="absolute right-0 bottom-[70px] flex items-end text-[#1668b8]">
      <SogouLogo size={55} />
      <div className="h-[44px] mb-px w-[186px] -ml-px flex items-center gap-[18px] pl-3 bg-white border-y border-[#cdd6e4] overflow-hidden">
        <button aria-label="中文">
          <Icon w={26} h={26}><path d="M2 6h22v12H2zM13 1v24" stroke="#1668b8" strokeWidth={3.200} /></Icon>
        </button>
        <button aria-label="标点">
          <Icon w={20} h={22}>
            <circle cx="4.500" cy="5" r="3" stroke="#1668b8" strokeWidth={2.400} />
            <path d="M13 20c3-1 6-5 5-10-1-3-6-2-5 2 0 2 2 2 3 2 0 2-2 4-3 6z" fill="#1668b8" />
          </Icon>
        </button>
        <button aria-label="表情">
          <Icon w={26} h={26}>
            <circle cx="13" cy="13" r="12.500" fill="#0e6cc9" />
            <ellipse cx="9" cy="9" rx="2" ry="2.500" fill="#fff" />
            <ellipse cx="17" cy="9" rx="2" ry="2.500" fill="#fff" />
            <path d="M7 14h12c0 9-12 9-12 0z" fill="#fff" />
          </Icon>
        </button>
        <button aria-label="语音">
          <Icon w={22} h={28}>
            <rect x="6" y="0" width="10" height="17" rx="5" fill="#0e6cc9" />
            <path d="M1 12c0 13 20 13 20 0M7 26h8" stroke="#0e6cc9" strokeWidth={2.800} />
          </Icon>
        </button>
        <button aria-label="软键盘">
          <Icon w={28} h={22}><path d="M2 2h24v18H2zM6 8h3M6 14h3" stroke="#0e6cc9" strokeWidth={2.800} /></Icon>
        </button>
      </div>
    </div>
  )
}

export default function App() {
  return (
    <div className="relative h-screen flex flex-col overflow-hidden bg-[#e6e6e8] text-[22px] leading-8 font-['Noto_Sans','Noto_Sans_CJK_SC',sans-serif]">
      <TitleBar />
      <Ribbon />
      <div className="flex-1 min-h-0 flex overflow-hidden">
        <NavPane />
        <Document />
      </div>
      <StatusBar />
      <TaskBar />
      <button className="absolute right-[46px] bottom-[154px] size-[88px] rounded-full border-[5px] border-[#eef8ff] bg-gradient-to-bl from-[#2f80ff] to-[#5cc0fb] shadow-md text-white">
        <svg viewBox="0 0 78 78" className="absolute inset-0" fill="none" aria-hidden="true">
          <path d="M45 12l5 1M53 15l8 8" stroke="#d8f0ff" strokeWidth={2} />
          <path d="M28 74c10-8 24-3 36-8-9 11-24 14-36 8z" fill="#7ad4fb" />
        </svg>
        04:22
      </button>
      <InputMethodBar />
    </div>
  )
}
